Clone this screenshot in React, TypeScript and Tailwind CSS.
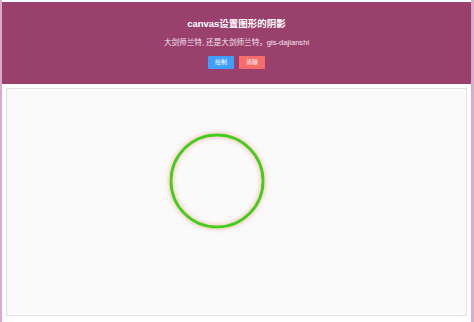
import React from 'react';

export default function App() {
  return (
    <div
      className="w-[474px] h-[322px] bg-white pt-[2px] border-l-[2px] border-r-[3px] border-[#dbaacd] overflow-hidden"
      style={{ fontFamily: '"Liberation Sans", "Noto Sans CJK SC", sans-serif' }}
    >
      <header className="h-[82px] bg-[#9a406d] flex flex-col items-center pt-[15px] text-white">
        <h1 className="text-[9.5px] font-bold leading-[13px]">canvas设置图形的阴影</h1>
        <p className="mt-[7px] text-[7.6px] leading-[11px] text-[#f3e6ee]">大剑师兰特, 还是大剑师兰特，gis-dajianshi</p>
        <div className="mt-[8px] flex gap-[5px]">
          <button className="w-[26px] h-[13px] bg-[#409eff] text-[6px] leading-[13px] text-white rounded-[1px]">绘制</button>
          <button className="w-[26px] h-[13px] bg-[#f56c6c] text-[6px] leading-[13px] text-white rounded-[1px]">清除</button>
        </div>
      </header>
      <main className="px-[4px] pt-[4px]">
        <div className="h-[228px] border border-[#e2e2e2] bg-[#fafafa]">
          <svg width="460" height="226" className="block">
            <defs>
              <filter id="sh" x="-30%" y="-30%" width="160%" height="160%">
                <feDropShadow dx="0" dy="0" stdDeviation="2.5" floodColor="#ff7a6a" floodOpacity="0.7" />
              </filter>
            </defs>
            <circle cx="210" cy="92" r="46" fill="none" stroke="#3fcf1f" strokeWidth="3" filter="url(#sh)" />
          </svg>
        </div>
      </main>
    </div>
  );
}
